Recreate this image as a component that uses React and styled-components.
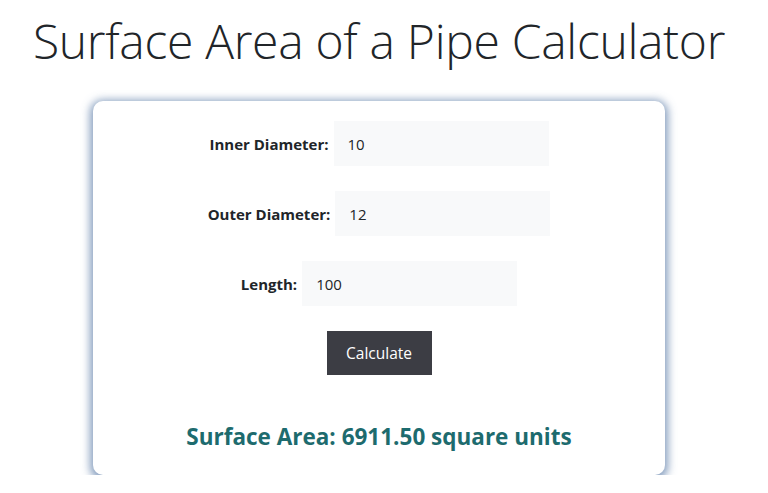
import styled, { createGlobalStyle } from "styled-components";

const GlobalStyle = createGlobalStyle`
	body {
		margin: 0;
		background: #ffffff;
		font-family: "Open Sans", "Noto Sans", sans-serif;
		color: #212529;
	}
`;

const Page = styled.div`
	display: flex;
	flex-direction: column;
	align-items: center;
	padding: 9px 10px 0 0;
`;

const Title = styled.h1`
	margin: 0 0 28px 0;
	font-family: "Open Sans", sans-serif;
	font-weight: 300;
	font-size: 48px;
	line-height: 64px;
	color: #212529;
	letter-spacing: -0.3px;
`;

const Card = styled.div`
	box-sizing: border-box;
	width: 572px;
	height: 374px;
	padding: 20px 0 0 0;
	background: #ffffff;
	border-radius: 10px;
	box-shadow: 0 2px 8px 3px rgba(105, 135, 175, 0.8);
	display: flex;
	flex-direction: column;
	align-items: center;
`;

const Row = styled.div`
	display: flex;
	align-items: center;
	justify-content: center;
	gap: 5px;
	margin-bottom: 25px;
`;

const Label = styled.label`
	font-weight: 700;
	font-size: 15px;
	color: #212529;
`;

const Input = styled.input`
	box-sizing: border-box;
	width: 215px;
	height: 45px;
	padding: 0 14px;
	border: none;
	background: #f8f9fa;
	font-family: "Open Sans", sans-serif;
	font-size: 15px;
	color: #212529;
	outline: none;
`;

const Button = styled.button`
	width: 105px;
	height: 44px;
	border: none;
	background: #3c3d44;
	color: #ffffff;
	font-family: "Open Sans", sans-serif;
	font-size: 15.5px;
	cursor: pointer;
`;

const Result = styled.div`
	margin-top: 46px;
	font-weight: 700;
	font-size: 22.5px;
	color: #1d6b6e;
`;

const fields = [
	{ label: "Inner Diameter:", value: "10" },
	{ label: "Outer Diameter:", value: "12" },
	{ label: "Length:", value: "100" },
];

export default function App() {
	return (
		<>
			<GlobalStyle />
			<Page>
				<Title>Surface Area of a Pipe Calculator</Title>
				<Card>
					{fields.map((f) => (
						<Row key={f.label}>
							<Label>{f.label}</Label>
							<Input defaultValue={f.value} />
						</Row>
					))}
					<Button>Calculate</Button>
					<Result>Surface Area: 6911.50 square units</Result>
				</Card>
			</Page>
		</>
	);
}
